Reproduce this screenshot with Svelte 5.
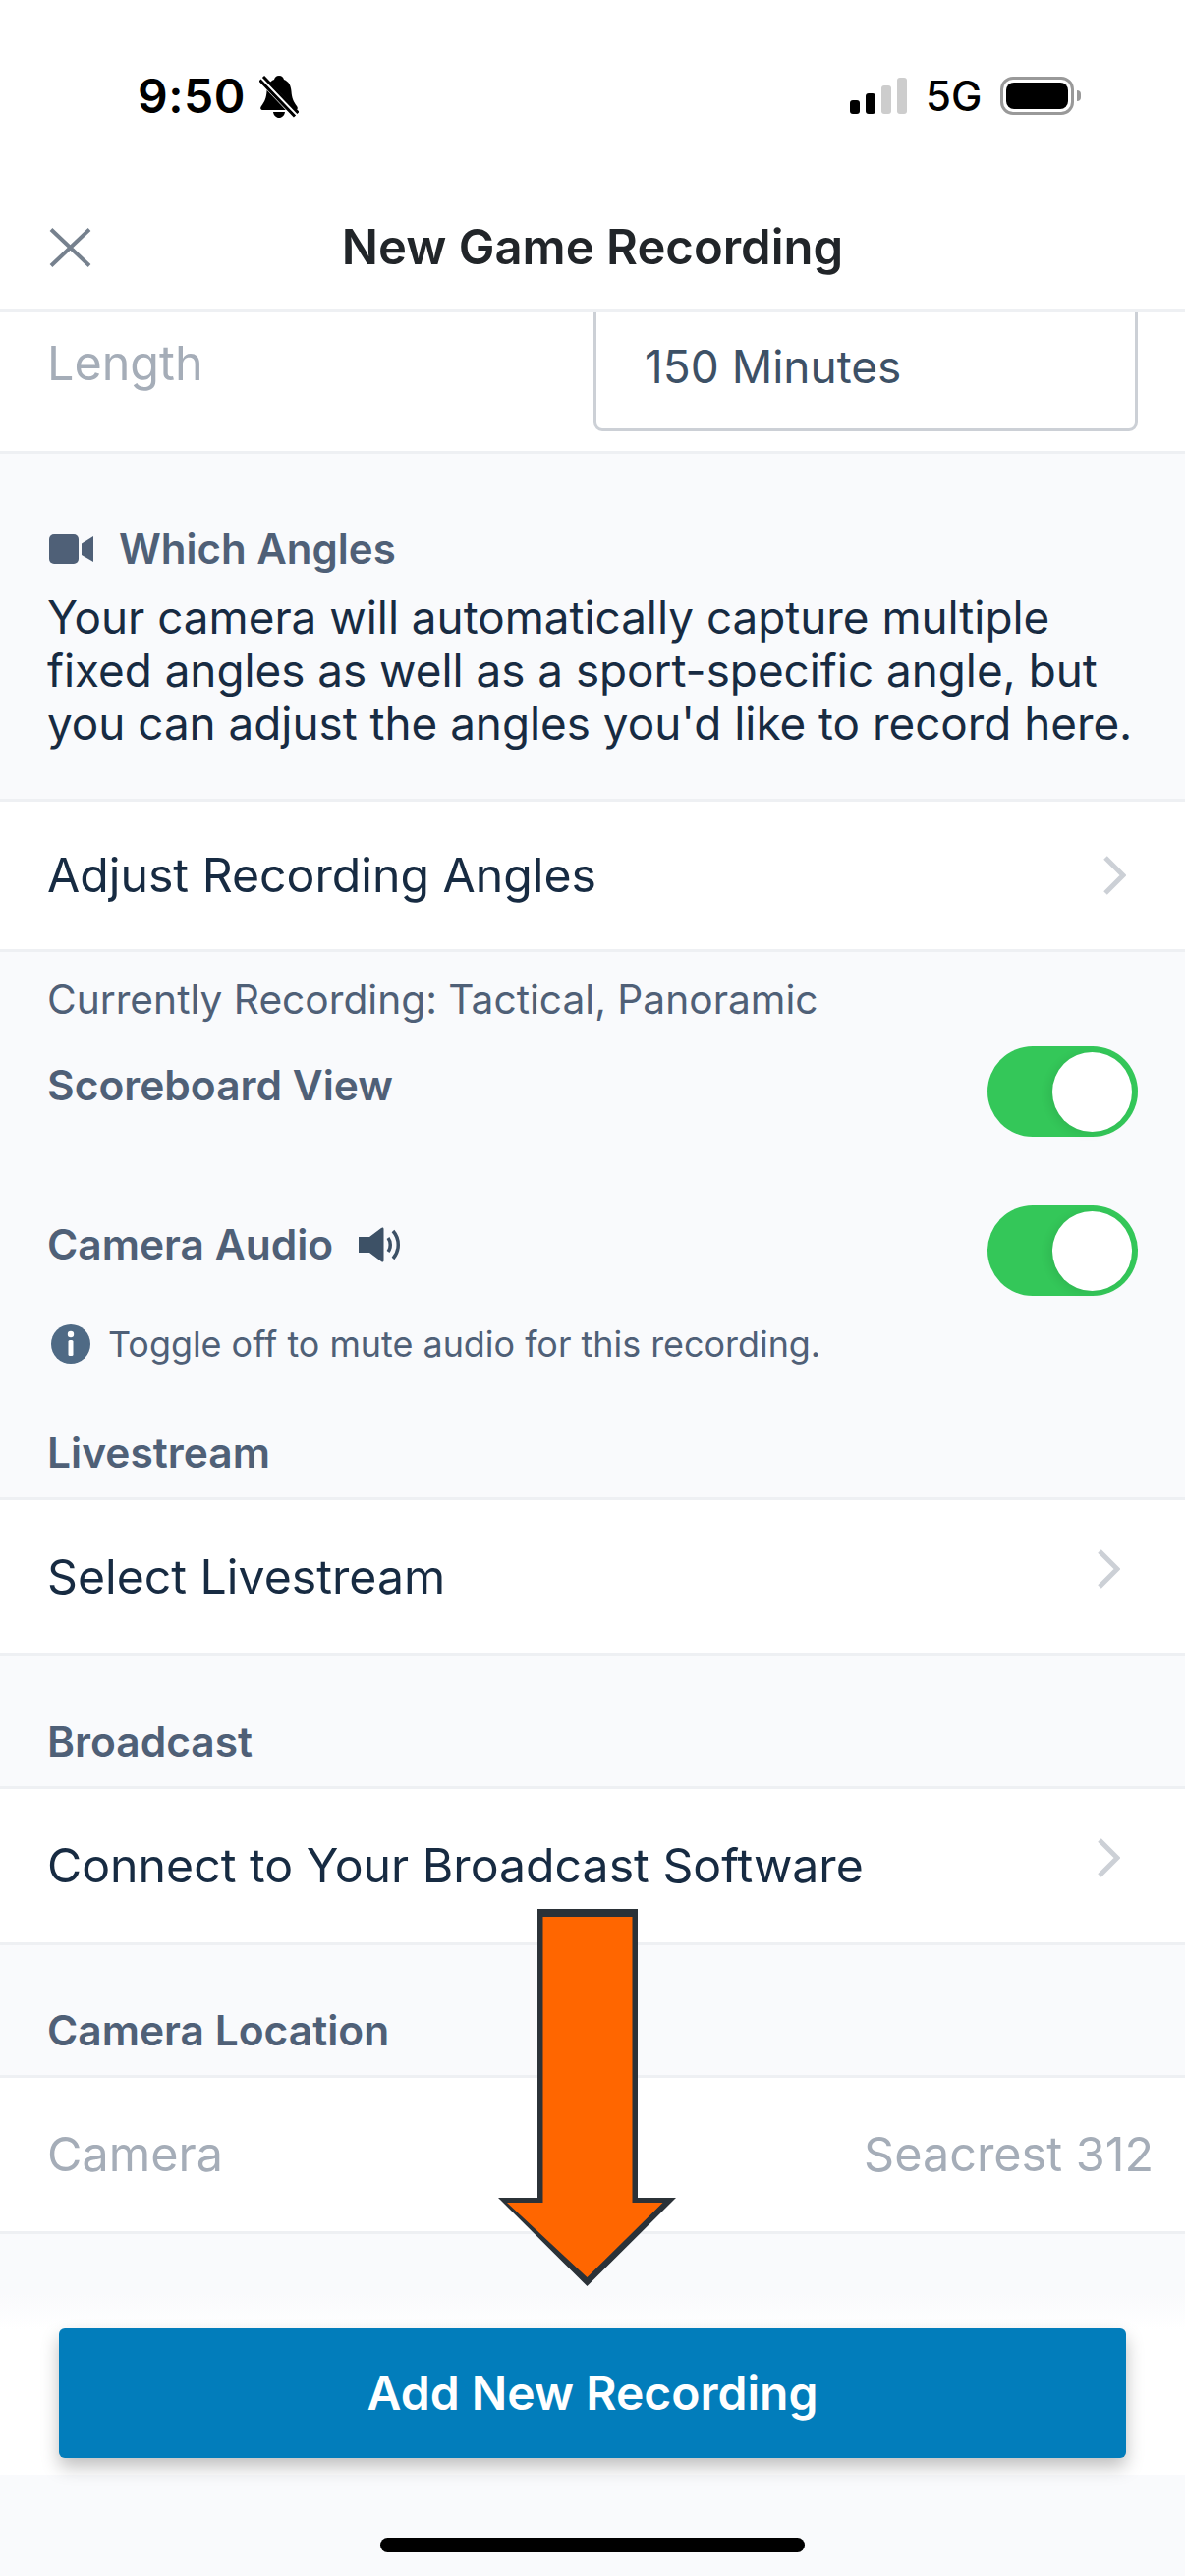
<script>
  const toggles = [
    { label: 'Scoreboard View', audio: false },
    { label: 'Camera Audio', audio: true }
  ];
  const links = [
    { heading: 'Livestream', text: 'Select Livestream' },
    { heading: 'Broadcast', text: 'Connect to Your Broadcast Software' }
  ];
</script>

<div class="page">
  <header class="top">
    <div class="status">
      <div class="time">
        <span>9:50</span>
        <svg class="bell" viewBox="0 0 40 43" aria-hidden="true">
          <path d="M20 0c3 0 4.500 2 5 4 5 2 7 6 7.500 12 .5 7 2 10 5.500 15 1.500 2 1 4-2 4H4c-3 0-3.500-2-2-4 3.500-5 5-8 5.500-15C8 10 10 6 15 4c.5-2 2-4 5-4z" fill="#000"/>
          <path d="M14 37h12c-.5 3.500-3 6-6 6s-5.500-2.500-6-6z" fill="#000"/>
          <path d="M1 2l37 39" stroke="#fff" stroke-width="8" fill="none"/>
          <path d="M0.500 4.500L36 41.500M4 1L39.500 38" stroke="#000" stroke-width="3" fill="none"/>
        </svg>
      </div>
      <div class="indicators">
        <div class="bars">
          <i class="on h14"></i><i class="on h21"></i><i class="h29"></i><i class="h37"></i>
        </div>
        <span class="net">5G</span>
        <div class="battery"><div class="charge"></div></div>
        <div class="cap"></div>
      </div>
    </div>
    <div class="nav">
      <svg class="close" viewBox="0 0 43 40" aria-hidden="true">
        <path d="M2 1.500L41 38.500M41 1.500L2 38.500" stroke="#76818e" stroke-width="4" fill="none"/>
      </svg>
      <h1>New Game Recording</h1>
    </div>
  </header>

  <section class="length">
    <span class="muted">Length</span>
    <div class="input">150 Minutes</div>
  </section>

  <section class="intro">
    <div class="intro-title">
      <svg class="cam" viewBox="0 0 45 30" aria-hidden="true">
        <rect x="0" y="0" width="30" height="30" rx="5" fill="#4f6077"/>
        <path d="M33 9.500L45 2v26l-12-7z" fill="#4f6077"/>
      </svg>
      <b>Which Angles</b>
    </div>
    <p>Your camera will automatically capture multiple fixed angles as well as a sport-specific angle, but you can adjust the angles you'd like to record here.</p>
  </section>

  <div class="row adjust">
    <span>Adjust Recording Angles</span>
    <svg class="chev" viewBox="0 0 24 40" aria-hidden="true"><path d="M3 2l18 18L3 38" stroke="#ccd0d6" stroke-width="5" fill="none"/></svg>
  </div>

  <section class="settings">
    <div class="current">Currently Recording: Tactical, Panoramic</div>
    {#each toggles as t}
      <div class="toggle-row" class:audio={t.audio}>
        <div class="tlabel">
          <b>{t.label}</b>
          {#if t.audio}
            <svg class="speaker" viewBox="0 0 44 36" aria-hidden="true">
              <path d="M0 10h11L23 1c1.500-1 2.500-.5 2.500 1v32c0 1.500-1 2-2.500 1L11 26H0z" fill="#3d5166"/>
              <path d="M30 11c3 4 3 10 0 14M35 4c7 8 7 20 0 28" stroke="#3d5166" stroke-width="3.500" fill="none"/>
            </svg>
          {/if}
        </div>
        <div class="switch"><div class="knob"></div></div>
      </div>
    {/each}
    <div class="note">
      <svg class="info" viewBox="0 0 40 40" aria-hidden="true">
        <circle cx="20" cy="20" r="20" fill="#4f6a85"/>
        <circle cx="20" cy="10" r="3.200" fill="#fff"/>
        <rect x="17.500" y="16" width="5" height="16" rx="1.500" fill="#fff"/>
      </svg>
      <span>Toggle off to mute audio for this recording.</span>
    </div>
  </section>

  {#each links as l, i}
    <div class="heading" class:first={i === 0}><b>{l.heading}</b></div>
    <div class="row link">
      <span>{l.text}</span>
      <svg class="chev" viewBox="0 0 24 40" aria-hidden="true"><path d="M3 2l18 18L3 38" stroke="#ccd0d6" stroke-width="5" fill="none"/></svg>
    </div>
  {/each}

  <div class="heading"><b>Camera Location</b></div>
  <div class="row camera">
    <span class="muted">Camera</span>
    <span class="muted">Seacrest 312</span>
  </div>

  <footer class="footer">
    <button class="cta">Add New Recording</button>
  </footer>
  <div class="home"><div class="indicator"></div></div>

  <svg class="arrow" viewBox="0 0 181 384" aria-hidden="true">
    <path d="M40 0h102v294h39L90.500 384 0 294h40z" fill="#2b3238"/>
    <path d="M45.500 8h91v291h31L90.500 375 9 299h36.500z" fill="#ff6600"/>
  </svg>
</div>

<style>
  :global(body) {
    margin: 0;
    background: #f9fafc;
  }
  .page {
    position: relative;
    width: 1206px;
    height: 2622px;
    overflow: hidden;
    background: #f9fafc;
    font-family: Inter, "Noto Sans", sans-serif;
    color: #172b42;
  }
  b { font-weight: 600; }
  .top {
    background: #fff;
    height: 315px;
  }
  .status {
    height: 170px;
    display: flex;
    justify-content: space-between;
    align-items: flex-start;
  }
  .time {
    display: flex;
    align-items: flex-start;
    gap: 14px;
    padding: 74px 0 0 140px;
    font-size: 48px;
    line-height: 48px;
    font-weight: 600;
    color: #000;
    letter-spacing: 0.5px;
  }
  .bell { width: 40px; height: 43px; margin-top: 3px; }
  .indicators {
    position: relative;
    display: flex;
    align-items: flex-start;
    padding: 78px 113px 0 0;
  }
  .bars {
    display: flex;
    align-items: flex-end;
    gap: 6px;
    height: 37px;
    margin-top: 1px;
  }
  .bars i {
    display: block;
    width: 10px;
    border-radius: 3px;
    background: #cdcdcd;
  }
  .bars i.on { background: #000; }
  .h14 { height: 14px; }
  .h21 { height: 21px; }
  .h29 { height: 29px; }
  .h37 { height: 37px; }
  .net {
    margin-left: 19px;
    font-size: 42px;
    line-height: 40px;
    font-weight: 500;
    color: #000;
    width: 76px;
  }
  .battery {
    box-sizing: border-box;
    width: 75px;
    height: 39px;
    border: 3px solid #999;
    border-radius: 13px;
    padding: 3px;
  }
  .charge {
    width: 100%;
    height: 100%;
    background: #000;
    border-radius: 8px;
  }
  .cap {
    width: 4px;
    height: 11px;
    margin: 14px 0 0 3px;
    background: #999;
    border-radius: 0 4px 4px 0;
    position: absolute;
    right: 113px;
    transform: translateX(7px);
  }
  .nav {
    position: relative;
    height: 145px;
    display: flex;
    justify-content: center;
    align-items: flex-start;
  }
  .close {
    position: absolute;
    left: 50px;
    top: 62px;
    width: 43px;
    height: 40px;
  }
  h1 {
    margin: 52px 0 0;
    font-size: 49px;
    line-height: 60px;
    font-weight: 600;
    color: #212529;
  }
  .length {
    height: 141px;
    background: #fff;
    border-top: 3px solid #eef0f3;
    border-bottom: 3px solid #eef0f3;
    display: flex;
    justify-content: space-between;
    overflow: hidden;
    padding: 0 48px;
  }
  .length .muted { margin-top: 22px; }
  .muted {
    font-size: 48.5px;
    line-height: 60px;
    color: #a5adb8;
  }
  .input {
    box-sizing: border-box;
    width: 554px;
    height: 150px;
    margin-top: -29px;
    border: 3px solid #ccd0d6;
    border-radius: 9px;
    padding: 51px 0 0 49px;
    font-size: 46px;
    line-height: 60px;
    color: #3d5166;
  }
  .intro {
    height: 351px;
    box-sizing: border-box;
    padding: 75px 0 0 48px;
  }
  .intro-title {
    display: flex;
    align-items: center;
    gap: 26px;
    height: 44px;
    font-size: 42px;
    line-height: 44px;
    color: #4f6077;
  }
  .cam { width: 45px; height: 30px; margin-left: 2px; }
  .intro p {
    margin: 21px 0 0;
    width: 1130px;
    font-size: 45.8px;
    line-height: 54px;
    color: #172b42;
  }
  .row {
    display: flex;
    justify-content: space-between;
    align-items: center;
    background: #fff;
    border-top: 3px solid #eef0f3;
    border-bottom: 3px solid #eef0f3;
    padding: 0 48px;
    font-size: 48.2px;
    line-height: 60px;
  }
  .adjust { height: 150px; padding-right: 60px; }
  .chev { width: 24px; height: 40px; }
  .settings {
    height: 485px;
    box-sizing: border-box;
    padding: 0 48px;
  }
  .current {
    padding-top: 25px;
    height: 71px;
    font-size: 40.7px;
    line-height: 48px;
    color: #4f6077;
  }
  .toggle-row {
    display: flex;
    justify-content: space-between;
    align-items: flex-start;
    height: 162px;
    font-size: 42.5px;
    line-height: 50px;
    color: #4f6077;
  }
  .tlabel { display: flex; align-items: center; gap: 26px; margin-top: 15px; }
  .speaker { width: 44px; height: 36px; }
  .switch {
    width: 153px;
    height: 92px;
    border-radius: 46px;
    background: #34c759;
    position: relative;
  }
  .knob {
    position: absolute;
    right: 6px;
    top: 6px;
    width: 81px;
    height: 81px;
    border-radius: 50%;
    background: #fff;
    box-shadow: -4px 2px 10px rgba(0, 0, 0, 0.08);
  }
  .note {
    display: flex;
    align-items: center;
    gap: 18px;
    padding-left: 4px;
    margin-top: -43px;
    font-size: 35.9px;
    line-height: 44px;
    color: #4f6077;
  }
  .info { width: 40px; height: 40px; }
  .heading {
    padding-left: 48px;
    font-size: 42.5px;
    line-height: 50px;
    color: #4f6077;
    height: 50px;
    padding-top: 62px;
    padding-bottom: 20px;
  }
  .heading.first { padding-top: 0; }
  .link { height: 156px; padding-right: 66px; }
  .link .chev { margin-top: -16px; }
  .camera { height: 156px; padding-right: 32px; }
  .footer {
    position: absolute;
    left: 0;
    right: 0;
    top: 2335px;
    height: 184px;
    background: linear-gradient(#f9fafc, #fff 20%);
    display: flex;
    justify-content: center;
    padding-top: 35px;
    box-sizing: border-box;
  }
  .cta {
    width: 1086px;
    height: 132px;
    border: 0;
    border-radius: 6px;
    background: #027dbb;
    color: #fff;
    font: 600 48px/60px Inter, sans-serif;
    box-shadow: 0 9px 18px rgba(0, 0, 0, 0.25);
  }
  .home {
    position: absolute;
    left: 0;
    right: 0;
    top: 2583px;
    display: flex;
    justify-content: center;
  }
  .indicator {
    width: 432px;
    height: 15px;
    border-radius: 8px;
    background: #000;
  }
  .arrow {
    position: absolute;
    left: 507px;
    top: 1943px;
    width: 181px;
    height: 384px;
  }
</style>
